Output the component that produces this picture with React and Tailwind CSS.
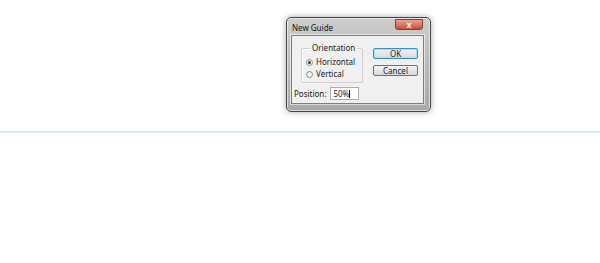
import React from 'react';

const Radio = ({ checked, label }) => (
  <div className="flex items-center gap-[3px] h-[12px]">
    <span className="w-[7px] h-[7px] rounded-full border border-[#8e8f8f] bg-gradient-to-br from-[#e6e6e6] to-[#ffffff] flex items-center justify-center">
      {checked && <span className="w-[3px] h-[3px] rounded-full bg-[#2b3a4a]" />}
    </span>
    <span className="text-[8px] leading-none text-[#1a1a1a]">{label}</span>
  </div>
);

const Button = ({ children, focused }) => (
  <div
    className={`w-[45px] h-[11px] rounded-[2px] border flex items-center justify-center text-[8px] leading-none text-[#1a1a1a] bg-gradient-to-b from-[#f3f3f3] to-[#dadada] ${
      focused ? 'border-[#3c8fc6] shadow-[inset_0_0_0_1px_#9fe2f7]' : 'border-[#707070]'
    }`}
  >
    {children}
  </div>
);

export default function App() {
  return (
    <div
      className="w-[600px] h-[263px] bg-white flex flex-col overflow-hidden"
      style={{ fontFamily: '"Noto Sans", "Liberation Sans", sans-serif' }}
    >
      {/* top area with the dialog */}
      <div className="h-[131px] pl-[286px] pt-[17px]">
        <div className="w-[145px] h-[95px] rounded-[5px] border border-[#474747] bg-gradient-to-b from-[#cdcdcd] to-[#a9a9a9] shadow-[0_0_6px_rgba(0,0,0,0.35),inset_0_0_0_1px_rgba(255,255,255,0.55)] flex flex-col">
          {/* title bar */}
          <div className="h-[17px] flex items-start justify-between pl-[5px] pr-[7px]">
            <span className="text-[8px] leading-none text-[#111] mt-[6px]">New Guide</span>
            <div className="w-[28px] h-[11px] mt-[1px] rounded-b-[3px] border border-[#8a3a2e] bg-gradient-to-b from-[#e8a496] to-[#c94a36] flex items-center justify-center">
              <span className="text-[8px] leading-none font-bold text-white">x</span>
            </div>
          </div>
          {/* content panel */}
          <div className="ml-[4px] mr-[6px] h-[69px] border border-[#7e7e7e] bg-[#f0f0f0] shadow-[0_0_0_1px_rgba(255,255,255,0.6)] flex">
            <div className="flex flex-col pl-[1px]">
              <div className="ml-[8px] mt-[12px] w-[62px] h-[35px] border border-[#d0d0d0] rounded-[2px] shadow-[inset_1px_1px_0_#fff] relative flex flex-col pl-[4px] pt-[7px]">
                <span className="absolute -top-[5px] left-[8px] px-[2px] bg-[#f0f0f0] text-[8px] leading-none text-[#1a1a1a]">
                  Orientation
                </span>
                <Radio checked label="Horizontal" />
                <Radio label="Vertical" />
              </div>
              <div className="flex items-center mt-[4px] pl-[1px] gap-[4px]">
                <span className="text-[8px] leading-none text-[#1a1a1a]">Position:</span>
                <div className="w-[29px] h-[13px] bg-white border border-[#abadb3] flex items-center pl-[2px]">
                  <span className="text-[8px] leading-none text-[#1a1a1a]">50%</span>
                  <span className="w-px h-[8px] bg-black" />
                </div>
              </div>
            </div>
            <div className="flex flex-col gap-[6px] ml-[10px] mt-[12px]">
              <Button focused>OK</Button>
              <Button>Cancel</Button>
            </div>
          </div>
        </div>
      </div>
      {/* guide line */}
      <div className="h-px bg-[#b2eef2]" />
      <div className="h-px bg-[#e2f8f9]" />
      <div className="flex-1" />
    </div>
  );
}
